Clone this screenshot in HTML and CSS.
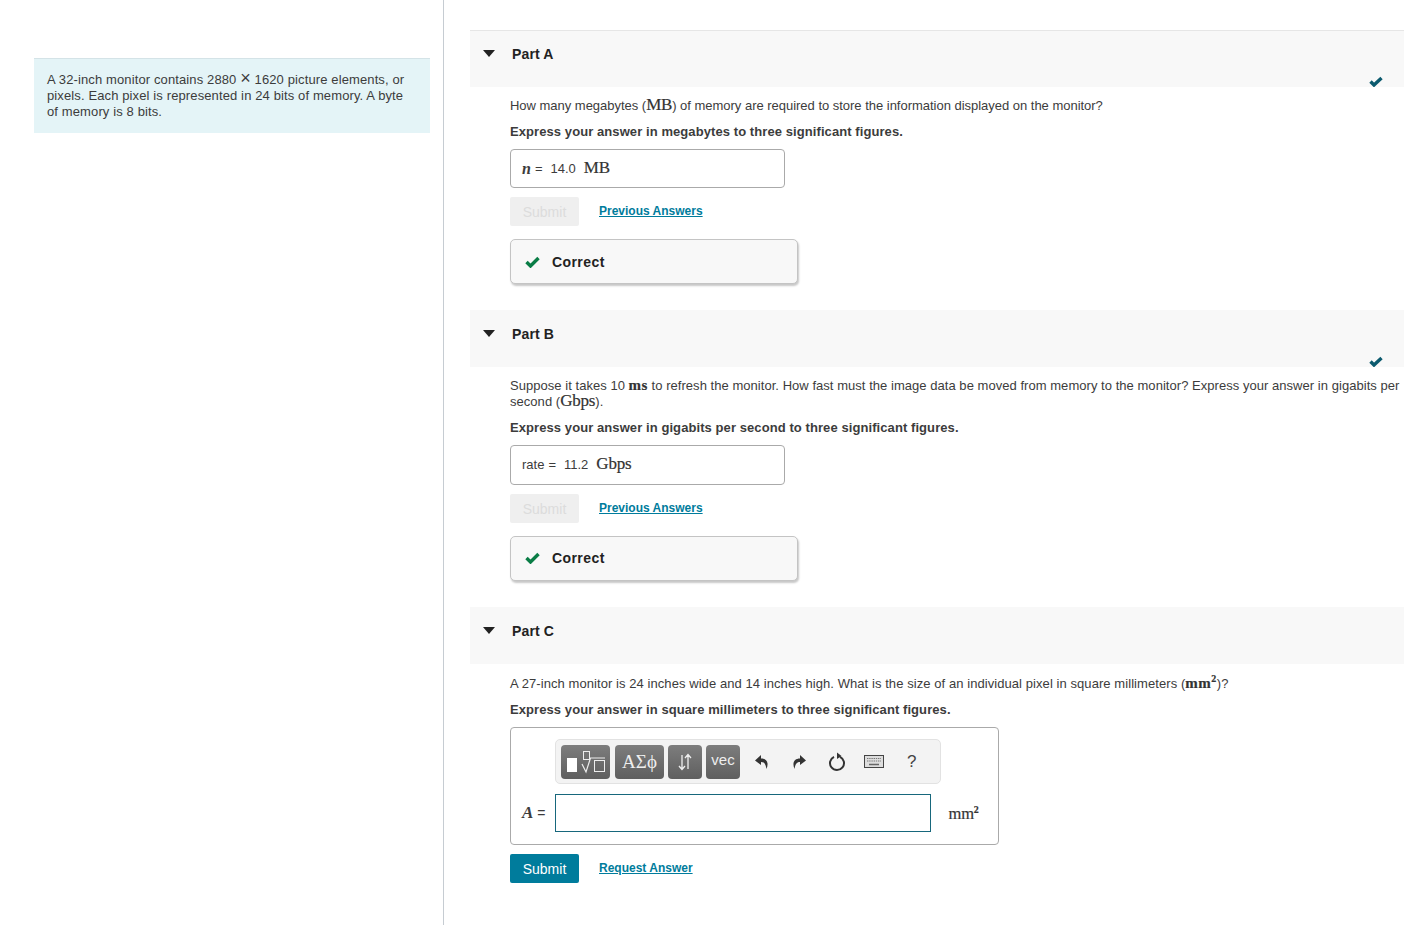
FILE: index.html
```html
<!DOCTYPE html>
<html lang="en">
<head>
<meta charset="utf-8">
<title>Monitor memory problem</title>
<link rel="stylesheet" href="styles.css">
</head>
<body>
<div class="page">
  <aside class="side">
    <div class="intro">A 32-inch monitor contains 2880 <span class="times">×</span> 1620 picture elements, or pixels. Each pixel is represented in 24 bits of memory. A byte of memory is 8 bits.</div>
  </aside>
  <main class="main">
    <section class="part part-a">
      <header class="part-head first">
        <svg class="caret" width="12" height="7" viewBox="0 0 12 7"><path d="M0 0H12L6 7Z" fill="#222"/></svg>
        <span class="part-title">Part A</span>
        <svg class="done" width="14" height="11" viewBox="0 0 14 11"><path d="M1.5 5.5L5 9L12.5 2" fill="none" stroke="#0b5a6e" stroke-width="3.4"/></svg>
      </header>
      <div class="body">
        <p class="q">How many megabytes (<span class="m">MB</span>) of memory are required to store the information displayed on the monitor?</p>
        <p class="ins">Express your answer in megabytes to three significant figures.</p>
        <div class="answer"><span class="it">n</span><span class="eq">=</span><span class="val">14.0</span><span class="m unit">MB</span></div>
        <div class="actions"><button class="submit off">Submit</button><a class="link" href="#">Previous Answers</a></div>
        <div class="correct">
          <svg width="15" height="12" viewBox="0 0 15 12"><path d="M1.5 6L5.5 10L13.5 2" fill="none" stroke="#0a7d46" stroke-width="3.4"/></svg>
          <span>Correct</span>
        </div>
      </div>
    </section>
    <section class="part part-b">
      <header class="part-head">
        <svg class="caret" width="12" height="7" viewBox="0 0 12 7"><path d="M0 0H12L6 7Z" fill="#222"/></svg>
        <span class="part-title">Part B</span>
        <svg class="done" width="14" height="11" viewBox="0 0 14 11"><path d="M1.5 5.5L5 9L12.5 2" fill="none" stroke="#0b5a6e" stroke-width="3.4"/></svg>
      </header>
      <div class="body">
        <p class="q">Suppose it takes 10 <span class="m small">ms</span> to refresh the monitor. How fast must the image data be moved from memory to the monitor? Express your answer in gigabits per second (<span class="m">Gbps</span>).</p>
        <p class="ins">Express your answer in gigabits per second to three significant figures.</p>
        <div class="answer tall"><span>rate</span><span class="eq">=</span><span class="val">11.2</span><span class="m unit">Gbps</span></div>
        <div class="actions"><button class="submit off">Submit</button><a class="link" href="#">Previous Answers</a></div>
        <div class="correct">
          <svg width="15" height="12" viewBox="0 0 15 12"><path d="M1.5 6L5.5 10L13.5 2" fill="none" stroke="#0a7d46" stroke-width="3.4"/></svg>
          <span>Correct</span>
        </div>
      </div>
    </section>
    <section class="part part-c">
      <header class="part-head">
        <svg class="caret" width="12" height="7" viewBox="0 0 12 7"><path d="M0 0H12L6 7Z" fill="#222"/></svg>
        <span class="part-title">Part C</span>
      </header>
      <div class="body">
        <p class="q">A 27-inch monitor is 24 inches wide and 14 inches high. What is the size of an individual pixel in square millimeters (<span class="m small">mm<sup>2</sup></span>)?</p>
        <p class="ins">Express your answer in square millimeters to three significant figures.</p>
        <div class="editor">
          <div class="toolbar">
            <div class="tb-btn wide">
              <svg width="44" height="24" viewBox="0 0 44 24"><rect x="3" y="8" width="10" height="14" fill="#fff"/><rect x="19.5" y="1.5" width="6" height="8" fill="none" stroke="#eee"/><path d="M18 14L22 22L26.5 8H41" fill="none" stroke="#eee" stroke-width="1.2"/><rect x="30.5" y="10.5" width="10" height="11" fill="none" stroke="#eee"/></svg>
            </div>
            <div class="tb-btn greek">ΑΣϕ</div>
            <div class="tb-btn arrows">
              <svg width="18" height="18" viewBox="0 0 18 18"><path d="M6 2V16M3 13L6 16.5L9 13M12 16V2M9 5L12 1.5L15 5" fill="none" stroke="#eee" stroke-width="1.3"/></svg>
            </div>
            <div class="tb-btn vec">vec</div>
            <div class="tools">
              <svg width="16" height="16" viewBox="0 0 16 16"><path d="M7 1L1 6.5L7 11V8C10 8 11.5 9.5 12.5 15C15 9 13 4.5 7 4.5Z" fill="#333"/></svg>
              <svg width="16" height="16" viewBox="0 0 16 16"><path d="M9 1L15 6.5L9 11V8C6 8 4.5 9.5 3.5 15C1 9 3 4.5 9 4.5Z" fill="#333"/></svg>
              <svg width="18" height="20" viewBox="0 0 18 20"><path d="M6 4.8A7 7 0 1 0 12 4.8" fill="none" stroke="#333" stroke-width="2"/><path d="M9 0.5L13.5 4L9 7Z" fill="#333"/></svg>
              <svg class="kbd" width="20" height="13" viewBox="0 0 20 13"><rect x="0.5" y="0.5" width="19" height="12" fill="#ddd" stroke="#444"/><path d="M3 3.5H17M3 6H17" stroke="#777" stroke-width="1.2" stroke-dasharray="1.4 .8"/><path d="M5 9.5H15" stroke="#666" stroke-width="1.5"/></svg>
              <span class="help">?</span>
            </div>
          </div>
          <div class="input-row">
            <span class="it cap">A</span><span class="eq">=</span>
            <div class="field"></div>
            <span class="m unit-c">mm<sup>2</sup></span>
          </div>
        </div>
        <div class="actions last"><button class="submit">Submit</button><a class="link" href="#">Request Answer</a></div>
      </div>
    </section>
  </main>
</div>
</body>
</html>
```

FILE: styles.css
```css
* { box-sizing: border-box; }
html, body { margin: 0; padding: 0; background: #fff; }
body { font-family: "Liberation Sans", Arial, sans-serif; font-size: 13px; line-height: 16px; color: #3c3c3c; }
.page { display: flex; width: 1405px; height: 925px; overflow: hidden; }
.side { width: 444px; flex: none; border-right: 1px solid #c6ccd2; padding: 58px 13px 0 34px; }
.intro { background: #e4f4f7; border-top: 1px solid #d4e3e7; height: 75px; padding: 12px 24px 0 13px; letter-spacing: .12px; }
.times { font-size: 18px; line-height: 14px; }
.main { width: 934px; margin-left: 26px; padding-top: 30px; flex: none; }
.part-head { height: 57px; background: #f8f8f8; position: relative; display: flex; align-items: flex-start; padding: 16px 0 0 13px; font-size: 14px; }
.part-head.first { border-top: 1px solid #e6e6e6; padding-top: 15px; }
.caret { margin-top: 4px; }
.part-title { margin-left: 17px; font-weight: bold; color: #222; letter-spacing: .15px; }
.done { position: absolute; right: 21px; top: 46px; }
.first .done { top: 45px; }
.part-a { height: 280px; }
.part-b { height: 297px; }
.body { padding: 11px 2px 0 40px; }
.part-c .q { padding-top: 1px; letter-spacing: .07px; }
.q { margin: 0; letter-spacing: .04px; }
.part-a .q { letter-spacing: -.02px; }
.q .m { line-height: 14px; font-size: 17px; }
.q .m.small { font-size: 15px; font-weight: bold; letter-spacing: .5px; }
.ins { margin: 10px 0 0; font-weight: bold; letter-spacing: .08px; }
.m { font-family: "Liberation Serif", serif; font-size: 17px; color: #333; letter-spacing: -.2px; -webkit-text-stroke: .2px #333; }
.m sup { font-size: 10px; line-height: 0; font-weight: bold; }
.answer { margin-top: 9px; width: 275px; height: 39px; border: 1px solid #aaa; border-radius: 4px; display: flex; align-items: center; padding: 0 11px; }
.answer.tall { height: 40px; }
.it { font-family: "Liberation Serif", serif; font-style: italic; font-weight: bold; font-size: 16px; }
.eq { margin-left: 4px; }
.val { margin-left: 8px; }
.unit { margin-left: 8px; position: relative; top: -1px; }
.actions { margin-top: 9px; display: flex; align-items: flex-start; height: 29px; }
.submit { width: 69px; height: 29px; border: 0; border-radius: 2px; background: #007c9c; color: #fff; font: 14px "Liberation Sans", Arial, sans-serif; padding: 0; }
.submit.off { background: #efefef; color: #dcdcdc; }
.link { margin-left: 20px; margin-top: 6px; font-size: 12px; font-weight: bold; color: #007c9c; }
.correct { margin-top: 13px; width: 288px; height: 45px; border: 1px solid #c4c4c4; border-radius: 5px; background: #f8f8f8; box-shadow: 1px 2px 2px rgba(0,0,0,.22); display: flex; align-items: center; padding: 0 0 1px 14px; gap: 12px; font-size: 14px; font-weight: bold; color: #222; letter-spacing: .42px; }
.part-a .correct { padding-bottom: 0; }
.editor { margin-top: 9px; width: 489px; height: 118px; border: 1px solid #aaa; border-radius: 4px; position: relative; padding: 11px 0 0 44px; }
.toolbar { width: 386px; height: 45px; background: #f3f3f3; border: 1px solid #e2e2e2; border-radius: 5px; display: flex; align-items: center; padding: 0 0 0 5px; gap: 4px; }
.tb-btn { height: 34px; background: linear-gradient(#7d7d7d, #5f5f5f); border-radius: 4px; color: #eee; display: flex; align-items: center; justify-content: center; }
.wide { width: 49px; margin-right: 1px; }
.greek { width: 49px; font-family: "Liberation Serif", serif; font-size: 19px; }
.arrows { width: 34px; }
.vec { width: 34px; font-size: 15px; padding-bottom: 3px; }
.tools { display: flex; align-items: center; margin-left: 10px; gap: 21px; }
.kbd { margin-left: -3px; }
.help { font-size: 17px; color: #444; margin-left: 2px; }
.input-row { display: flex; align-items: center; margin: 10px 0 0 -33px; height: 38px; }
.cap { font-size: 17px; }
.input-row .eq { font-size: 14px; }
.field { margin-left: 9px; width: 376px; height: 38px; border: 1px solid #17677c; }
.unit-c { margin-left: 18px; position: relative; top: 1px; font-size: 16.5px; }
```
